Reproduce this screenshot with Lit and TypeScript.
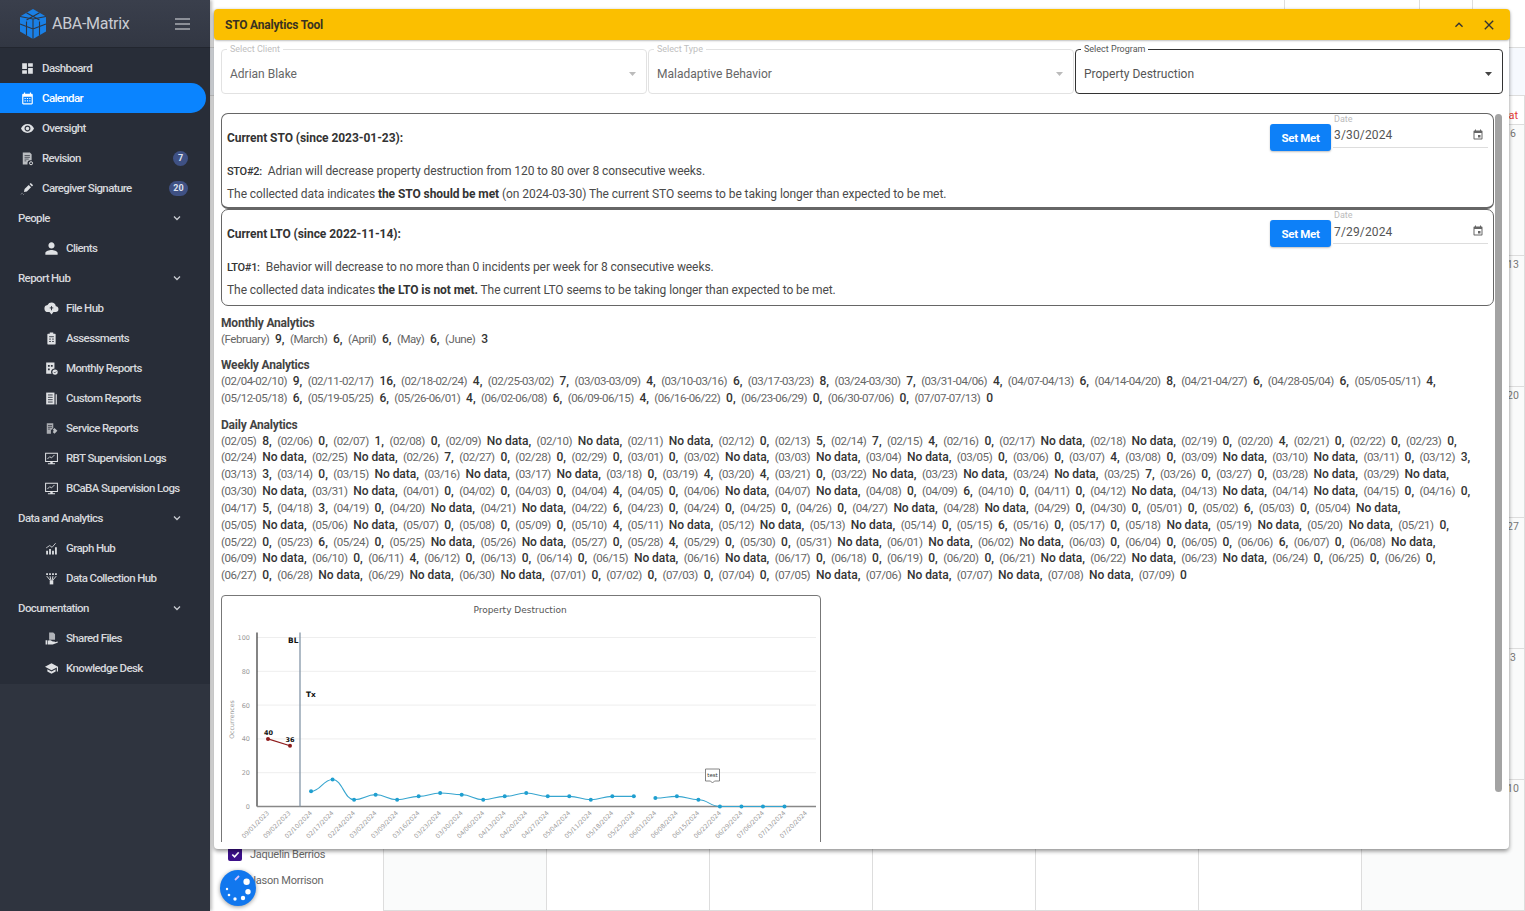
import { LitElement, html, css, svg } from "lit";
import { customElement } from "lit/decorators.js";

const ICONS: Record<string, any> = {
  dashboard: svg`<path d="M3 13h8V3H3v10zm0 8h8v-6H3v6zm10 0h8V11h-8v10zm0-18v6h8V3h-8z"/>`,
  calendar: svg`<path d="M19 4h-1V2h-2v2H8V2H6v2H5c-1.1 0-2 .9-2 2v14c0 1.1.9 2 2 2h14c1.1 0 2-.9 2-2V6c0-1.1-.9-2-2-2zm0 16H5V9h14v11z"/><path d="M7 11h2v2H7zm4 0h2v2h-2zm4 0h2v2h-2zM7 15h2v2H7zm4 0h2v2h-2zm4 0h2v2h-2z"/>`,
  eye: svg`<path d="M12 4.5C7 4.5 2.73 7.61 1 12c1.73 4.39 6 7.5 11 7.5s9.27-3.11 11-7.5c-1.73-4.39-6-7.5-11-7.5zM12 17c-2.76 0-5-2.24-5-5s2.24-5 5-5 5 2.24 5 5-2.24 5-5 5zm0-8c-1.66 0-3 1.34-3 3s1.34 3 3 3 3-1.34 3-3-1.34-3-3-3z"/>`,
  revision: svg`<path d="M4 2h12l3 3v10h-2a5 5 0 0 0-5 5v2H4z" opacity=".8"/><path d="M7 7h9M7 10h9M7 13h7M7 16h3" stroke="#2a2f3a" stroke-width="1.2"/><circle cx="18" cy="20" r="2.6" fill="none" stroke="currentColor" stroke-width="1.6"/>`,
  pen: svg`<path d="M14 6l4 4-7 7-5 1 1-5z"/><path d="M15.5 4.5l2-2 4 4-2 2z"/><path d="M1 22c1-2 2-3 3-1s2 1 3 0" fill="none" stroke="currentColor" stroke-width="1" stroke-dasharray="1.5 1"/>`,
  person: svg`<g transform="translate(12 12) scale(1.3) translate(-12 -12)"><path d="M12 12c2.21 0 4-1.79 4-4s-1.79-4-4-4-4 1.79-4 4 1.79 4 4 4zm0 2c-2.67 0-8 1.34-8 4v2h16v-2c0-2.66-5.33-4-8-4z"/></g>`,
  cloud: svg`<path d="M19.35 10.04A7.49 7.49 0 0 0 12 4a7.5 7.5 0 0 0-6.65 4.04A6 6 0 0 0 6 20h13a5 5 0 0 0 .35-9.96z" transform="translate(0 -2)"/><path d="M12 22l-4-5h8z"/><path d="M12 8v7M9 11h6" stroke="#2a2f3a" stroke-width="1.6"/>`,
  clip: svg`<path d="M6 4h3V2h6v2h3a1 1 0 0 1 1 1v16a1 1 0 0 1-1 1H6a1 1 0 0 1-1-1V5a1 1 0 0 1 1-1z"/><path d="M8 9h8M8 13h3M13 13h3M8 17h3M13 17h3" stroke="#2a2f3a" stroke-width="1.5"/>`,
  monthly: svg`<path d="M3 2h14v10a6 6 0 0 0-5 9H3z"/><path d="M6 6h3v3H6zm5 0h3v3h-3zM6 12h3v3H6z" fill="#2a2f3a"/><circle cx="18" cy="18" r="4.5"/><path d="M16 18l1.5 1.5L20 17" fill="none" stroke="#2a2f3a" stroke-width="1.2"/>`,
  custom: svg`<path d="M3 2h14v20H3z"/><path d="M19 5h2v17h-2z"/><path d="M6 6h8M6 10h8M6 14h8M6 18h8" stroke="#2a2f3a" stroke-width="1.5"/>`,
  service: svg`<path d="M4 3h11v8l-4 4v6H4z" opacity=".7"/><path d="M6 7h7M6 10h7M6 13h4" stroke="#2a2f3a" stroke-width="1.2"/><path d="M14 14l3-3 5 5-5 5-3-3 2-2z" opacity=".8"/>`,
  monitor: svg`<path d="M2 3h20v14H2z" fill="none" stroke="currentColor" stroke-width="1.7"/><path d="M5 13l4-4 3 2 5-5" fill="none" stroke="currentColor" stroke-width="1.5"/><path d="M10 17h4v3h-4zM6 20h12v1.6H6z"/>`,
  graph: svg`<path d="M3 16h3v6H3zm5-3h3v9H8zm5 3h3v6h-3zm5-6h3v12h-3z"/><path d="M3 11l6-4 4 3 6-7" fill="none" stroke="currentColor" stroke-width="1.4"/>`,
  collect: svg`<path d="M9 15h6v7H9z"/><path d="M3 3h3v3H3zm5 0h3v3H8zm5 0h3v3h-3zm5 0h3v3h-3z"/><path d="M4 8l6 7M9.500 8l1.500 7M14.500 8L13 15M20 8l-6 7" stroke="currentColor" stroke-width="1.600" fill="none"/>`,
  shared: svg`<path d="M8 2h7l3 3v9H8z" opacity=".75"/><path d="M2 15h3v7H2zM6 16c4-2 6 0 8 1h3c1 0 1 2 0 2h-4l6-1 3-1c1 0 1 2 0 2l-8 3H6z"/>`,
  cap: svg`<path d="M12 3L1 9l11 6 9-4.900V17h2V9z"/><path d="M5 13.200v4L12 21l7-3.800v-4L12 17z"/>`,
};

const EVENT = "M17 12h-5v5h5v-5zM16 1v2H8V1H6v2H5c-1.110 0-1.990.9-1.990 2L3 19c0 1.100.890 2 2 2h14c1.100 0 2-.9 2-2V5c0-1.100-.9-2-2-2h-1V1h-2zm3 18H5V8h14v11z";

type Nav = { t: string; icon?: string; badge?: string; active?: boolean; head?: boolean; sub?: boolean };
const NAV: Nav[] = [
  { t: "Dashboard", icon: "dashboard" },
  { t: "Calendar", icon: "calendar", active: true },
  { t: "Oversight", icon: "eye" },
  { t: "Revision", icon: "revision", badge: "7" },
  { t: "Caregiver Signature", icon: "pen", badge: "20" },
  { t: "People", head: true },
  { t: "Clients", icon: "person", sub: true },
  { t: "Report Hub", head: true },
  { t: "File Hub", icon: "cloud", sub: true },
  { t: "Assessments", icon: "clip", sub: true },
  { t: "Monthly Reports", icon: "monthly", sub: true },
  { t: "Custom Reports", icon: "custom", sub: true },
  { t: "Service Reports", icon: "service", sub: true },
  { t: "RBT Supervision Logs", icon: "monitor", sub: true },
  { t: "BCaBA Supervision Logs", icon: "monitor", sub: true },
  { t: "Data and Analytics", head: true },
  { t: "Graph Hub", icon: "graph", sub: true },
  { t: "Data Collection Hub", icon: "collect", sub: true },
  { t: "Documentation", head: true },
  { t: "Shared Files", icon: "shared", sub: true },
  { t: "Knowledge Desk", icon: "cap", sub: true },
];

const MONTHLY = ["February 9", "March 6", "April 6", "May 6", "June 3"];
const WEEKLY = [
  "02/04-02/10 9|02/11-02/17 16|02/18-02/24 4|02/25-03/02 7|03/03-03/09 4|03/10-03/16 6|03/17-03/23 8|03/24-03/30 7|03/31-04/06 4|04/07-04/13 6|04/14-04/20 8|04/21-04/27 6|04/28-05/04 6|05/05-05/11 4",
  "05/12-05/18 6|05/19-05/25 6|05/26-06/01 4|06/02-06/08 6|06/09-06/15 4|06/16-06/22 0|06/23-06/29 0|06/30-07/06 0|07/07-07/13 0",
];
// N = No data
const DAILY = [
  "02/05 8|02/06 0|02/07 1|02/08 0|02/09 N|02/10 N|02/11 N|02/12 0|02/13 5|02/14 7|02/15 4|02/16 0|02/17 N|02/18 N|02/19 0|02/20 4|02/21 0|02/22 0|02/23 0",
  "02/24 N|02/25 N|02/26 7|02/27 0|02/28 0|02/29 0|03/01 0|03/02 N|03/03 N|03/04 N|03/05 0|03/06 0|03/07 4|03/08 0|03/09 N|03/10 N|03/11 0|03/12 3",
  "03/13 3|03/14 0|03/15 N|03/16 N|03/17 N|03/18 0|03/19 4|03/20 4|03/21 0|03/22 N|03/23 N|03/24 N|03/25 7|03/26 0|03/27 0|03/28 N|03/29 N",
  "03/30 N|03/31 N|04/01 0|04/02 0|04/03 0|04/04 4|04/05 0|04/06 N|04/07 N|04/08 0|04/09 6|04/10 0|04/11 0|04/12 N|04/13 N|04/14 N|04/15 0|04/16 0",
  "04/17 5|04/18 3|04/19 0|04/20 N|04/21 N|04/22 6|04/23 0|04/24 0|04/25 0|04/26 0|04/27 N|04/28 N|04/29 0|04/30 0|05/01 0|05/02 6|05/03 0|05/04 N",
  "05/05 N|05/06 N|05/07 0|05/08 0|05/09 0|05/10 4|05/11 N|05/12 N|05/13 N|05/14 0|05/15 6|05/16 0|05/17 0|05/18 N|05/19 N|05/20 N|05/21 0",
  "05/22 0|05/23 6|05/24 0|05/25 N|05/26 N|05/27 0|05/28 4|05/29 0|05/30 0|05/31 N|06/01 N|06/02 N|06/03 0|06/04 0|06/05 0|06/06 6|06/07 0|06/08 N",
  "06/09 N|06/10 0|06/11 4|06/12 0|06/13 0|06/14 0|06/15 N|06/16 N|06/17 0|06/18 0|06/19 0|06/20 0|06/21 N|06/22 N|06/23 N|06/24 0|06/25 0|06/26 0",
  "06/27 0|06/28 N|06/29 N|06/30 N|07/01 0|07/02 0|07/03 0|07/04 0|07/05 N|07/06 N|07/07 N|07/08 N|07/09 0",
];

const X_LABELS = [
  "09/01/2023", "09/02/2023", "02/10/2024", "02/17/2024", "02/24/2024", "03/02/2024", "03/09/2024",
  "03/16/2024", "03/23/2024", "03/30/2024", "04/06/2024", "04/13/2024", "04/20/2024", "04/27/2024",
  "05/04/2024", "05/11/2024", "05/18/2024", "05/25/2024", "06/01/2024", "06/08/2024", "06/15/2024",
  "06/22/2024", "06/29/2024", "07/06/2024", "07/13/2024", "07/20/2024",
];
const TX_A = [9, 16, 4, 7, 4, 6, 8, 7, 4, 6, 8, 6, 6, 4, 6, 6];
const TX_B = [5, 6, 4, 0, 0, 0, 0];
const px = (i: number) => 268 + i * 21.52;
const py = (v: number) => 806 - v * 1.69;

function smooth(pts: number[][]) {
  let d = `M${pts[0][0]} ${pts[0][1]}`;
  for (let i = 0; i < pts.length - 1; i++) {
    const a = pts[i], b = pts[i + 1];
    const c = (b[0] - a[0]) * 0.45;
    d += ` C${a[0] + c} ${a[1]} ${b[0] - c} ${b[1]} ${b[0]} ${b[1]}`;
  }
  return d;
}

// only the Saturday column shows past the dialog
const SATURDAYS = [6, 13, 20, 27, 3, 10];

@customElement("app-root")
export class AppRoot extends LitElement {
  static styles = css`
    :host { display: block; position: relative; width: 1525px; height: 911px; overflow: hidden; background: #fff;
      font-family: Roboto, "Liberation Sans", sans-serif; color: #333; }
    .page { display: flex; height: 911px; }
    .side { width: 210px; flex: none; background: #2f343f; color: #d8dade; box-shadow: 2px 0 3px rgba(0,0,0,.25); position: relative; z-index: 1; }
    .brand { height: 48px; box-sizing: border-box; display: flex; align-items: center; padding: 0 20px 0 19px; background: linear-gradient(#3a3f4c, #323743); border-bottom: 1px solid #22262f; }
    .brand svg.logo { width: 28px; height: 30px; flex: none; }
    .brand span { font-size: 16px; color: #c9ccd2; margin-left: 5px; flex: 1; letter-spacing: -.3px; }
    .brand svg.burger { width: 15px; height: 12px; }
    nav { background: #282d38; padding: 5px 0 1px; height: 630px; box-sizing: content-box; }
    .item { height: 30px; display: flex; align-items: center; font-size: 11.5px; letter-spacing: -.62px; font-weight: 500; color: #d6d8dc; padding-left: 21px; position: relative; margin-right: 4px; box-sizing: border-box; }
    .item svg { width: 13px; height: 13px; fill: currentColor; margin-right: 8px; flex: none; color: #dfe1e4; overflow: visible; }
    .item.sub { padding-left: 45px; }
    .item.head { padding-left: 18px; }
    .item.active { background: #0a84ff; color: #fff; border-radius: 0 15px 15px 0; }
    .item.active svg { color: #fff; }
    .badge { position: absolute; right: 18px; min-width: 15px; height: 15px; padding: 0 2px; box-sizing: border-box; border-radius: 8px; background: #3f5184; color: #dfe3ee; font-size: 9px; font-weight: 700; letter-spacing: 0; display: flex; align-items: center; justify-content: center; }
    .badge.wide { min-width: 19px; }
    .item svg.chev { position: absolute; left: 172px; width: 10px; height: 10px; margin: 0; fill: none; stroke: #c9ccd2; stroke-width: 1.3; }

    .main { flex: 1; min-width: 0; display: flex; flex-direction: column; }
    .tools { height: 48px; flex: none; box-sizing: border-box; border-bottom: 1px solid #ddd; display: flex; justify-content: flex-end; }
    .tools i { display: block; border-left: 1px solid #ddd; box-sizing: border-box; }
    .tools .wide { width: 135px; }
    .tools .narrow { width: 53px; }
    .band { height: 48px; flex: none; box-sizing: border-box; border-bottom: 1px solid #ddd; background: #f6f9fe; }
    .cal { flex: 1; display: flex; min-height: 0; }
    .people { width: 173px; flex: none; box-sizing: border-box; display: flex; flex-direction: column; justify-content: flex-end; padding: 0 0 24px 18px; font-size: 11px; letter-spacing: -.25px; color: #666; gap: 12px; }
    .person { display: flex; align-items: center; gap: 8px; height: 14px; }
    .check { width: 14px; height: 14px; border-radius: 2px; background: #3c0f8a; display: flex; align-items: center; justify-content: center; }
    .check svg { width: 11px; height: 11px; }
    .check.off { background: none; }
    .grid { flex: 1; display: grid; grid-template-columns: repeat(7, 163px); grid-template-rows: 29px repeat(6, 131px); border-left: 1px solid #ddd; }
    .dayname { font-size: 11px; color: #e53935; text-align: right; padding: 13px 6px 0 0; border-right: 1px solid #ddd; border-bottom: 1px solid #ddd; box-sizing: border-box; }
    .cell { border-right: 1px solid #ddd; border-bottom: 1px solid #ddd; font-size: 10.5px; color: #777; text-align: right; padding: 2px 5px 0 0; box-sizing: border-box; }
    .cell span { display: inline-block; width: 12px; text-align: center; }
    .cell.wk { background: #fafbfb; }

    .modal { position: absolute; left: 214px; top: 9px; width: 1295px; height: 840px; background: #fff; border-radius: 4px; box-shadow: 0 2px 4px rgba(0,0,0,.45); z-index: 2; display: flex; flex-direction: column; }
    .mhead { height: 31px; flex: none; background: #fbbf00; border-radius: 4px; margin-right: -1px; display: flex; align-items: center; padding: 0 13px 0 11px; box-shadow: 0 1px 2px rgba(0,0,0,.25); }
    .mhead b { flex: 1; font-size: 12px; font-weight: 700; letter-spacing: -.2px; color: #3a3320; }
    .mhead svg { width: 16px; height: 16px; fill: #333; margin-left: 14px; }
    .selects { flex: none; display: grid; grid-template-columns: 427px 427px 1fr; padding: 9px 6px 0 7px; }
    .sel { height: 45px; box-sizing: border-box; border: 1px solid #e2e2e2; border-radius: 4px; position: relative; display: flex; align-items: center; padding: 5px 8px 0 8px; font-size: 12px; color: #666; letter-spacing: 0; margin-right: 1px; }
    .sel:last-child { margin-right: 0; }
    .sel.focus { border-color: #333; color: #555; }
    .sel label { position: absolute; left: 5px; top: -6px; background: #fff; padding: 0 3px; font-size: 9px; color: #c0c0c0; letter-spacing: 0; line-height: 11px; }
    .sel.focus label { color: #555; }
    .sel span { flex: 1; }
    .sel svg { width: 7px; height: 4px; fill: #bbb; margin-right: 2px; }
    .sel.focus svg { fill: #444; }
    .scroll { flex: none; height: 729px; margin: 19px 0 0 7px; overflow: hidden; position: relative; }
    .thumb { position: absolute; left: 1274px; top: 1px; width: 7px; height: 678px; border-radius: 4px; background: #a3a3a3; }
    .content { width: 1273px; }
    .obj { height: 96px; box-sizing: border-box; border: 1px solid #666; border-radius: 7px; padding: 0 5px; position: relative; font-size: 12px; color: #444; }
    .obj + .obj { height: 97px; }
    .obj.first { border-bottom-width: 2px; }
    .obj .top { display: flex; align-items: flex-start; height: 46px; }
    .obj h4 { flex: 1; margin: 17px 0 0; font-size: 12px; font-weight: 700; color: #333; letter-spacing: -.05px; line-height: 14px; }
    .btn { width: 61px; height: 27px; margin-top: 10px; background: #0d80f8; color: #fff; border-radius: 3px; font-size: 11.5px; font-weight: 700; letter-spacing: -.3px; display: flex; align-items: center; justify-content: center; box-shadow: 0 1px 2px rgba(0,0,0,.25); }
    .date { width: 155px; margin: 0 0 0 2px; position: relative; height: 34px; box-sizing: border-box; border-bottom: 1px solid #ddd; }
    .date label { display: block; font-size: 9px; color: #bbb; line-height: 9px; padding-top: 1px; padding-left: 1px; }
    .date span { display: block; font-size: 12px; line-height: 14px; margin-top: 4px; color: #555; letter-spacing: .15px; padding-left: 1px; }
    .obj + .obj .date span { margin-top: 5px; }
    .date svg { position: absolute; right: 4px; top: 15px; width: 12px; height: 12px; fill: #666; }
    .line { font-size: 12px; line-height: 17px; margin-top: 2px; letter-spacing: -.07px; color: #4a4a4a; }
    .line.l1 { margin-top: 0; padding-top: 3px; }
    .line.l2 { margin-top: 6px; }
    .line small { font-size: 11px; font-weight: 500; letter-spacing: -.3px; margin-right: 6px; color: #333; }
    .line b { font-weight: 700; color: #333; }
    .title { font-size: 12px; font-weight: 700; color: #444; letter-spacing: -.2px; line-height: 16px; margin-top: 9px; }
    .title.daily { margin-top: 10px; }
    .row { display: flex; gap: 5.8px; font-size: 11.5px; line-height: 16.85px; white-space: nowrap; letter-spacing: -.45px; }
    .row.week { letter-spacing: -.49px; }
    .row .d { color: #666; font-weight: 400; }
    .row .v { color: #333; font-weight: 500; margin-right: -.3px; font-size: 12px; letter-spacing: -.05px; }
    .chart { width: 600px; box-sizing: border-box; border: 1.5px solid #777; border-radius: 4px; margin-top: 10.5px; height: 300px; }
    .chart svg { display: block; font-family: "DejaVu Sans", Verdana, sans-serif; }
    .cookie { position: absolute; left: 220px; top: 870px; width: 36px; height: 36px; z-index: 3; filter: drop-shadow(0 1px 2px rgba(0,0,0,.4)); }
  `;

  navItem(n: Nav) {
    const cls = ["item", n.sub ? "sub" : "", n.head ? "head" : "", n.active ? "active" : ""].join(" ");
    return html`<div class=${cls}>
      ${n.icon ? html`<svg viewBox="1 1 22 22">${ICONS[n.icon]}</svg>` : ""}
      ${n.t}
      ${n.badge ? html`<span class="badge ${n.badge.length > 1 ? "wide" : ""}">${n.badge}</span>` : ""}
      ${n.head ? html`<svg class="chev" viewBox="0 0 10 10"><path d="M2 3.500l3 3 3-3"/></svg>` : ""}
    </div>`;
  }

  // every pair keeps its comma except the one that closes the whole list
  pairs(line: string, closes: boolean, week = false) {
    const parts = line.split("|");
    return html`<div class="row ${week ? "week" : ""}">${parts.map((p, i) => {
      const sp = p.lastIndexOf(" ");
      const key = p.slice(0, sp);
      const raw = p.slice(sp + 1);
      const val = raw === "N" ? "No data" : raw;
      const last = closes && i === parts.length - 1;
      return html`<span class="d">(${key})</span><span class="v">${val}${last ? "" : ","}</span>`;
    })}</div>`;
  }

  objective(o: { title: string; date: string; tag: string; text: string; bold: string; rest: string; first?: boolean }) {
    return html`<div class="obj ${o.first ? "first" : ""}">
      <div class="top">
        <h4>${o.title}</h4>
        <div class="btn">Set Met</div>
        <div class="date">
          <label>Date</label><span>${o.date}</span>
          <svg viewBox="0 0 24 24"><path d=${EVENT} /></svg>
        </div>
      </div>
      <div class="line l1"><small>${o.tag}</small>${o.text}</div>
      <div class="line l2">The collected data indicates <b>${o.bold}</b> ${o.rest}</div>
    </div>`;
  }

  chart() {
    const grid = [100, 80, 60, 40, 20];
    const a = TX_A.map((v, i) => [px(i + 2), py(v)]);
    const b = TX_B.map((v, i) => [px(i + 18), py(v)]);
    return svg`
      <text x="520" y="612.500" font-size="9" fill="#555" text-anchor="middle">Property Destruction</text>
      ${grid.map((v) => svg`<line x1="257" x2="816" y1=${py(v)} y2=${py(v)} stroke="#eee" stroke-width="1"/>`)}
      ${[0, ...grid].map((v) => svg`<text x="250" y=${py(v) + 2.500} font-size="6.500" fill="#999" text-anchor="end">${v}</text>`)}
      <text transform="translate(233.500 719) rotate(-90)" font-size="6.200" fill="#999" text-anchor="middle">Occurrences</text>
      <line x1="257" x2="257" y1="632" y2="806" stroke="#333" stroke-width="1.200"/>
      <line x1="257" x2="816" y1="806" y2="806" stroke="#888" stroke-width="1.500"/>
      <line x1="300" x2="300" y1="632" y2="806" stroke="#8496a8" stroke-width="1.300"/>
      <text x="288" y="642.500" font-size="7.400" font-weight="700" fill="#111">BL</text>
      <text x="306" y="696.500" font-size="7.400" font-weight="700" fill="#111">Tx</text>
      <path d="M268 738.400L290 745.200" stroke="#8e1b1b" stroke-width="1.100" fill="none"/>
      <circle cx="268" cy="738.400" r="2" fill="#8e1b1b"/><circle cx="290" cy="745.200" r="2" fill="#8e1b1b"/>
      <text x="268.500" y="734.500" font-size="6.500" font-weight="700" fill="#111" text-anchor="middle">40</text>
      <text x="290" y="741" font-size="6.500" font-weight="700" fill="#111" text-anchor="middle">36</text>
      <path d=${smooth(a)} fill="none" stroke="#36a5cf" stroke-width="1.100"/>
      <path d=${smooth(b)} fill="none" stroke="#36a5cf" stroke-width="1.100"/>
      ${[...a, ...b].map((p) => svg`<circle cx=${p[0]} cy=${p[1]} r="2" fill="#1f9fd0"/>`)}
      ${X_LABELS.map((l, i) => svg`<text transform="translate(${px(i) + 1.500} 813) rotate(-45)" font-size="6.200" fill="#999" text-anchor="end">${l}</text>`)}
      <path d="M705.500 768.500h14v12h-5l-2 2-2-2h-5z" fill="#fff" stroke="#666" stroke-width=".8"/>
      <text x="712.500" y="776.500" font-size="5.400" fill="#333" text-anchor="middle">test</text>
    `;
  }

  calendarCells() {
    const cells = [];
    for (let i = 0; i < 42; i++) {
      const col = i % 7;
      const sat = col === 6;
      cells.push(html`<div class="cell ${col === 0 || sat ? "wk" : ""}">${sat ? html`<span>${SATURDAYS[(i - 6) / 7]}</span>` : ""}</div>`);
    }
    return cells;
  }

  render() {
    return html`
      <div class="page">
        <aside class="side">
          <div class="brand">
            <svg class="logo" viewBox="0 0 28 30">
              <path d="M14 0l13 7.500v15L14 30 1 22.500v-15z" fill="#1a80e6"/>
              <path d="M14 10l13-2.500M14 10L1 7.500M14 10v20M7.500 3.800L20.500 11M20.500 3.800L7.500 11M1 15l13 5 13-5M7.500 12.500v14M20.500 12.500v14" stroke="#2f3541" stroke-width="1.100" fill="none"/>
            </svg>
            <span>ABA-Matrix</span>
            <svg class="burger" viewBox="0 0 15 12"><path d="M0 1h15M0 6h15M0 11h15" stroke="#a9acb2" stroke-width="1.600"/></svg>
          </div>
          <nav>${NAV.map((n) => this.navItem(n))}</nav>
        </aside>
        <main class="main">
          <div class="tools">
            <i class="wide"></i><i class="narrow"></i><i class="narrow"></i>
          </div>
          <div class="band"></div>
          <div class="cal">
            <div class="people">
              <div class="person"><span class="check"><svg viewBox="0 0 12 12"><path d="M2.500 6l2.500 2.500 4.500-5" fill="none" stroke="#fff" stroke-width="1.800"/></svg></span>Jaquelin Berrios</div>
              <div class="person"><span class="check off"></span>Jason Morrison</div>
            </div>
            <div class="grid">
              ${[0, 1, 2, 3, 4, 5, 6].map((c) => html`<div class="dayname">${c === 6 ? "Sat" : ""}</div>`)}
              ${this.calendarCells()}
            </div>
          </div>
        </main>
      </div>

      <section class="modal">
        <header class="mhead">
          <b>STO Analytics Tool</b>
          <svg viewBox="0 0 24 24"><path d="M12 8l-6 6 1.410 1.410L12 10.830l4.590 4.580L18 14z"/></svg>
          <svg viewBox="0 0 24 24"><path d="M19 6.410L17.590 5 12 10.590 6.410 5 5 6.410 10.590 12 5 17.590 6.410 19 12 13.410 17.590 19 19 17.590 13.410 12z"/></svg>
        </header>
        <div class="selects">
          ${[["Select Client", "Adrian Blake"], ["Select Type", "Maladaptive Behavior"], ["Select Program", "Property Destruction"]].map(
            ([l, v], i) => html`<div class="sel ${i === 2 ? "focus" : ""}"><label>${l}</label><span>${v}</span>
              <svg viewBox="0 0 7 4"><path d="M0 0h7L3.500 4z"/></svg></div>`
          )}
        </div>
        <div class="scroll">
          <div class="thumb"></div>
          <div class="content">
            ${this.objective({
              first: true,
              title: "Current STO (since 2023-01-23):",
              date: "3/30/2024",
              tag: "STO#2:",
              text: "Adrian will decrease property destruction from 120 to 80 over 8 consecutive weeks.",
              bold: "the STO should be met",
              rest: "(on 2024-03-30) The current STO seems to be taking longer than expected to be met.",
            })}
            ${this.objective({
              title: "Current LTO (since 2022-11-14):",
              date: "7/29/2024",
              tag: "LTO#1:",
              text: "Behavior will decrease to no more than 0 incidents per week for 8 consecutive weeks.",
              bold: "the LTO is not met.",
              rest: "The current LTO seems to be taking longer than expected to be met.",
            })}
            <div class="title">Monthly Analytics</div>
            ${this.pairs(MONTHLY.join("|"), true)}
            <div class="title">Weekly Analytics</div>
            ${WEEKLY.map((l, i) => this.pairs(l, i === WEEKLY.length - 1, true))}
            <div class="title daily">Daily Analytics</div>
            ${DAILY.map((l, i) => this.pairs(l, i === DAILY.length - 1))}
            <div class="chart">
              <svg width="597" height="290" viewBox="222 595.500 597 290">${this.chart()}</svg>
            </div>
          </div>
        </div>
      </section>

      <svg class="cookie" viewBox="0 0 36 36">
        <circle cx="18" cy="18" r="18" fill="#1177ee"/>
        <circle cx="26.600" cy="11.700" r="3.200" fill="#fff"/><circle cx="28" cy="21.700" r="2.700" fill="#fff"/>
        <circle cx="23" cy="28" r="2.200" fill="#fff"/><circle cx="15" cy="29" r="1.700" fill="#fff"/>
        <circle cx="9" cy="25" r="1.300" fill="#fff"/><circle cx="7" cy="19" r="1.200" fill="#fff"/>
        <path d="M15 10l4-4" stroke="#d9c2ff" stroke-width="1.800"/>
      </svg>
    `;
  }
}
